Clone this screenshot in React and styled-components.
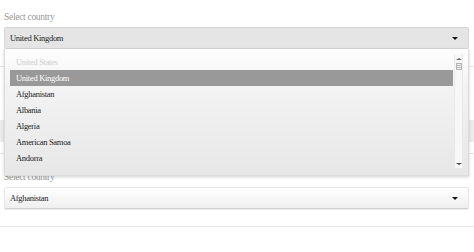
import React from 'react'
import styled, { createGlobalStyle, css } from 'styled-components'

const GlobalStyle = createGlobalStyle`
    html, body {
        margin: 0;
        padding: 0;
        background: #fff;
        font-family: "Liberation Serif", "Times New Roman", serif;
    }
`

const Page = styled.div`
    width: 474px;
    height: 252px;
    overflow: hidden;
`

const Field = styled.section`
    padding: 0 5px 0 4px;
`

const Label = styled.div`
    margin-top: ${ props => props.offset }px;
    height: 12px;
    line-height: 12px;
    font-size: 9.5px;
    letter-spacing: -0.3px;
    color: #999;
`

const SelectWrap = styled.div`
    position: relative;
    margin-top: 4px;
`

const variants = {
    open: css`
        background: #e5e5e5;
        border: 1px solid #d6d6d6;
    `,
    plain: css`
        background: linear-gradient(#ffffff, #efefef);
        border: 1px solid #e6e6e6;
        border-bottom-color: #cfcfcf;
        box-shadow: 0 1px 1px rgba(0, 0, 0, 0.08);
    `,
}

const SelectBox = styled.div`
    box-sizing: border-box;
    height: 22px;
    display: flex;
    align-items: center;
    justify-content: space-between;
    padding: 0 10px 0 5px;
    border-radius: 2px;
    font-size: 8.5px;
    letter-spacing: -0.3px;
    color: #222;
    ${ props => variants[props.variant] }
`

/* the second field lies under the open menu; only its edges show */
const HiddenBand = styled.div`
    margin-top: 53px;
    height: 22px;
    background: #ececec;
`

const Caret = styled.span`
    width: 0;
    height: 0;
    border-left: 3px solid transparent;
    border-right: 3px solid transparent;
    border-${ props => props.up ? 'bottom' : 'top' }: ${ props => props.size || 3 }px solid ${ props => props.color || '#111' };
`

const Rule = styled.hr`
    margin: ${ props => props.offset }px 0 0;
    border: 0;
    height: 1px;
    background: #e6e6e6;
`

const Menu = styled.div`
    position: absolute;
    top: 100%;
    left: 0;
    right: 0;
    z-index: 10;
    box-sizing: border-box;
    height: 127px;
    display: flex;
    gap: 1px;
    padding: 5px 5px 0 5px;
    background: linear-gradient(#fefefe, #f3f3f3 30%, #e7e7e7);
    border: 1px solid #dcdcdc;
    border-top: 0;
    box-shadow: 0 1px 3px rgba(0, 0, 0, 0.18);
    overflow: hidden;
`

const Options = styled.ul`
    flex: 1;
    margin: 0;
    padding: 0;
    list-style: none;
`

const Option = styled.li`
    height: 16px;
    line-height: 16px;
    padding-left: 6px;
    font-size: 8.5px;
    letter-spacing: -0.3px;
    color: ${ props => props.disabled ? '#cdcdcd' : '#222' };
    ${ props => props.active && css`
        background: #999;
        color: #fff;
    ` }
`

const Scrollbar = styled.div`
    box-sizing: border-box;
    width: 9px;
    height: 114px;
    display: flex;
    flex-direction: column;
    align-items: center;
    padding: 4px 0 3px;
    border-left: 1px solid #e9e9e9;
    border-right: 1px solid #e9e9e9;
    background: #f7f7f7;
`

const Thumb = styled.div`
    box-sizing: border-box;
    width: 6px;
    height: 7px;
    margin-top: 3px;
    border: 1px solid #b5b5b5;
    background: repeating-linear-gradient(#eee 0 1px, #bbb 1px 2px);
`

const Spacer = styled.div`
    flex: 1;
`

const countries = [
    'United States',
    'United Kingdom',
    'Afghanistan',
    'Albania',
    'Algeria',
    'American Samoa',
    'Andorra',
]

const App = () => (
    <Page>
        <GlobalStyle />

        <Field>
            <Label offset={ 11 }>Select country</Label>
            <SelectWrap>
                <SelectBox variant="open">
                    <span>United Kingdom</span>
                    <Caret />
                </SelectBox>
                <Menu>
                    <Options>
                        {
                            countries.map((name, i) => (
                                <Option key={ name } disabled={ i === 0 } active={ i === 1 }>{ name }</Option>
                            ))
                        }
                    </Options>
                    <Scrollbar>
                        <Caret up size={ 2 } color="#666" />
                        <Thumb />
                        <Spacer />
                        <Caret size={ 2 } color="#444" />
                    </Scrollbar>
                </Menu>
            </SelectWrap>
        </Field>
        <Rule offset={ 17 } />

        <HiddenBand />
        <Rule offset={ 11 } />

        <Field>
            <Label offset={ 17 }>Select country</Label>
            <SelectWrap>
                <SelectBox variant="plain">
                    <span>Afghanistan</span>
                    <Caret />
                </SelectBox>
            </SelectWrap>
        </Field>
        <Rule offset={ 17 } />
    </Page>
)

export default App
